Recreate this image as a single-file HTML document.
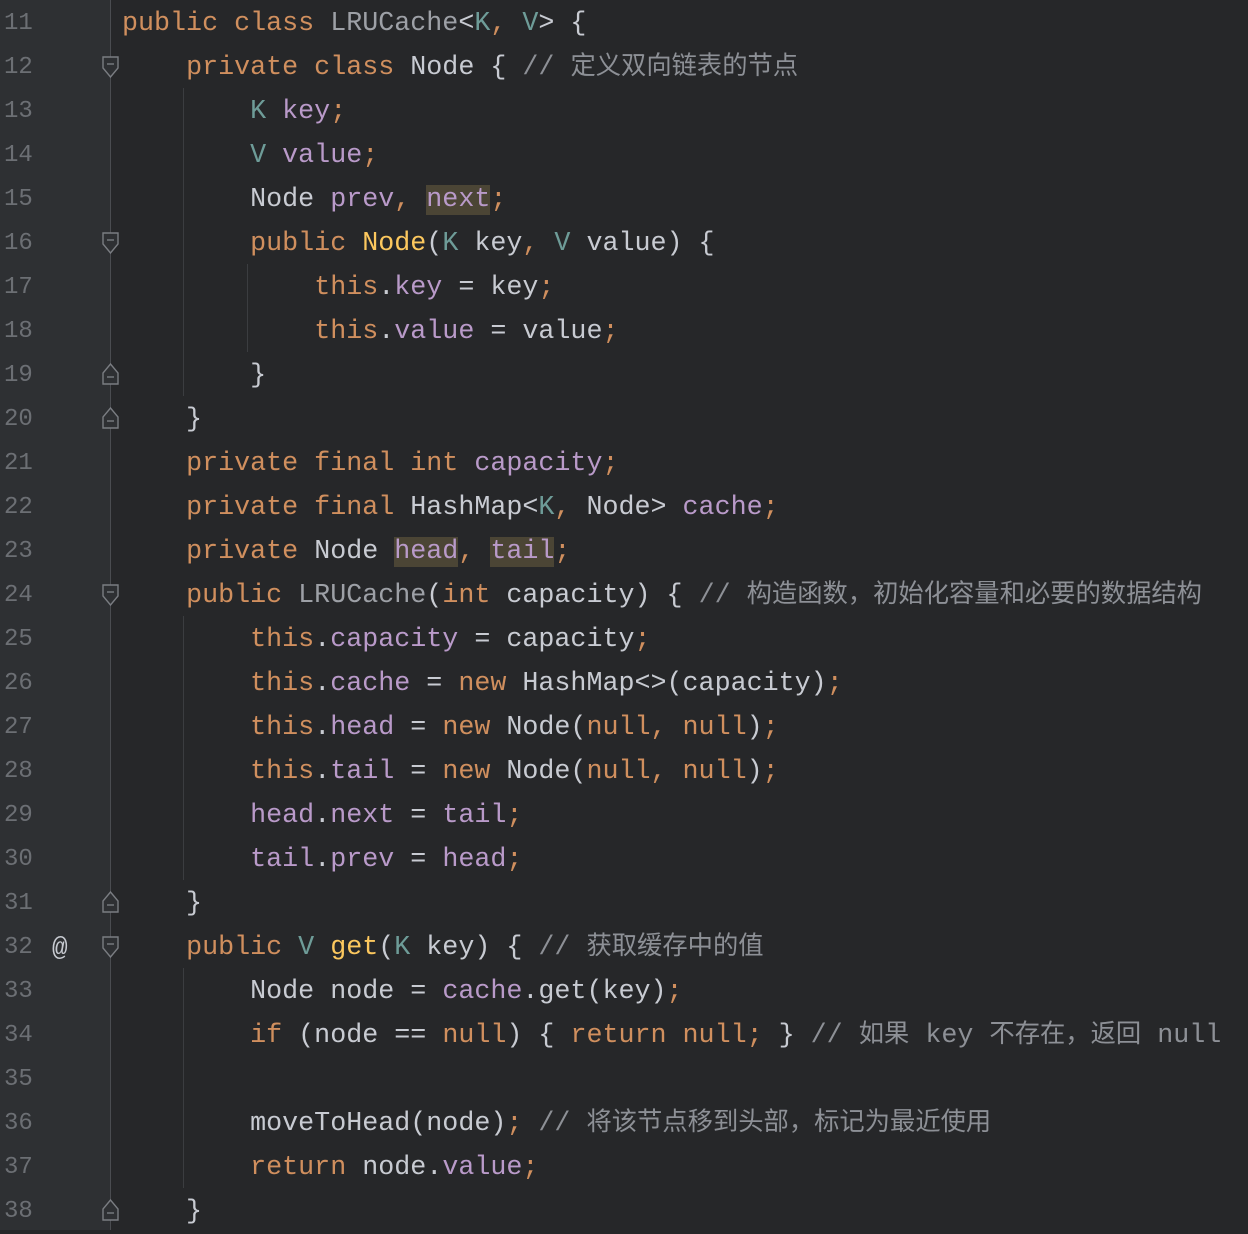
<!DOCTYPE html>
<html><head><meta charset="utf-8"><style>
html,body{margin:0;padding:0}
body{width:1248px;height:1230px;background:#262729;position:relative;overflow:hidden;font-family:"Liberation Mono","Noto Sans CJK SC",monospace;font-size:26.7px}
#gut{position:absolute;left:0;top:0;width:110px;height:1230px;background:#2e3033}
.fl{position:absolute;left:110px;top:0;width:1px;height:1230px;background:#4a4c50}
.ln{position:absolute;left:4px;width:40px;color:#6c6f74;font-size:24px;line-height:44px;font-family:"Liberation Mono",monospace;margin-top:2px}
.l{position:absolute;left:122px;white-space:pre;line-height:44px;color:#c8cbd2;margin-top:2px}
.k{color:#d08f5e}.f{color:#b99ac9}.t{color:#6e9c98}.m{color:#fcc85e}.c{color:#8d9096}
.z{font-size:25.3px}
.g{color:#9da0a6}.h{background:#4b4535}
.ig{position:absolute;width:1px;background:#3b3d40}
.fold{position:absolute;left:101px;width:19px;height:22px}
</style></head><body>
<div id="gut"></div><div class="fl"></div>
<div class="ig" style="left:183px;top:88px;height:308px"></div>
<div class="ig" style="left:247px;top:264px;height:88px"></div>
<div class="ig" style="left:183px;top:616px;height:264px"></div>
<div class="ig" style="left:183px;top:968px;height:220px"></div>
<svg class="fold" style="top:56px" viewBox="0 0 19 22"><path d="M2 1H17V12L9.5 21L2 12Z" fill="#2e3033" stroke="#7a7d82" stroke-width="1.4"/><path d="M6 8H13" stroke="#7a7d82" stroke-width="1.4"/></svg>
<svg class="fold" style="top:232px" viewBox="0 0 19 22"><path d="M2 1H17V12L9.5 21L2 12Z" fill="#2e3033" stroke="#7a7d82" stroke-width="1.4"/><path d="M6 8H13" stroke="#7a7d82" stroke-width="1.4"/></svg>
<svg class="fold" style="top:584px" viewBox="0 0 19 22"><path d="M2 1H17V12L9.5 21L2 12Z" fill="#2e3033" stroke="#7a7d82" stroke-width="1.4"/><path d="M6 8H13" stroke="#7a7d82" stroke-width="1.4"/></svg>
<svg class="fold" style="top:936px" viewBox="0 0 19 22"><path d="M2 1H17V12L9.5 21L2 12Z" fill="#2e3033" stroke="#7a7d82" stroke-width="1.4"/><path d="M6 8H13" stroke="#7a7d82" stroke-width="1.4"/></svg>
<svg class="fold" style="top:363px" viewBox="0 0 19 22"><path d="M2 21H17V10L9.5 1L2 10Z" fill="#2e3033" stroke="#7a7d82" stroke-width="1.4"/><path d="M6 14H13" stroke="#7a7d82" stroke-width="1.4"/></svg>
<svg class="fold" style="top:407px" viewBox="0 0 19 22"><path d="M2 21H17V10L9.5 1L2 10Z" fill="#2e3033" stroke="#7a7d82" stroke-width="1.4"/><path d="M6 14H13" stroke="#7a7d82" stroke-width="1.4"/></svg>
<svg class="fold" style="top:891px" viewBox="0 0 19 22"><path d="M2 21H17V10L9.5 1L2 10Z" fill="#2e3033" stroke="#7a7d82" stroke-width="1.4"/><path d="M6 14H13" stroke="#7a7d82" stroke-width="1.4"/></svg>
<svg class="fold" style="top:1199px" viewBox="0 0 19 22"><path d="M2 21H17V10L9.5 1L2 10Z" fill="#2e3033" stroke="#7a7d82" stroke-width="1.4"/><path d="M6 14H13" stroke="#7a7d82" stroke-width="1.4"/></svg>
<div class="ln" style="top:0">11</div><div class="ln" style="top:44px">12</div><div class="ln" style="top:88px">13</div><div class="ln" style="top:132px">14</div><div class="ln" style="top:176px">15</div><div class="ln" style="top:220px">16</div><div class="ln" style="top:264px">17</div><div class="ln" style="top:308px">18</div><div class="ln" style="top:352px">19</div><div class="ln" style="top:396px">20</div><div class="ln" style="top:440px">21</div><div class="ln" style="top:484px">22</div><div class="ln" style="top:528px">23</div><div class="ln" style="top:572px">24</div><div class="ln" style="top:616px">25</div><div class="ln" style="top:660px">26</div><div class="ln" style="top:704px">27</div><div class="ln" style="top:748px">28</div><div class="ln" style="top:792px">29</div><div class="ln" style="top:836px">30</div><div class="ln" style="top:880px">31</div><div class="ln" style="top:924px">32</div><div class="ln" style="top:968px">33</div><div class="ln" style="top:1012px">34</div><div class="ln" style="top:1056px">35</div><div class="ln" style="top:1100px">36</div><div class="ln" style="top:1144px">37</div><div class="ln" style="top:1188px">38</div>
<div style="position:absolute;left:52px;top:926px;line-height:44px;color:#c8cbd2;font-size:26px">@</div>
<div class="l" style="top:0"><span class="k">public class </span><span class="g">LRUCache</span>&lt;<span class="t">K</span><span class="k">, </span><span class="t">V</span>&gt; {</div>
<div class="l" style="top:44px">    <span class="k">private class </span>Node { <span class="c">// <span class="z">定义双向链表的节点</span></span></div>
<div class="l" style="top:88px">        <span class="t">K</span> <span class="f">key</span><span class="k">;</span></div>
<div class="l" style="top:132px">        <span class="t">V</span> <span class="f">value</span><span class="k">;</span></div>
<div class="l" style="top:176px">        Node <span class="f">prev</span><span class="k">, </span><span class="f h">next</span><span class="k">;</span></div>
<div class="l" style="top:220px">        <span class="k">public </span><span class="m">Node</span>(<span class="t">K</span> key<span class="k">, </span><span class="t">V</span> value) {</div>
<div class="l" style="top:264px">            <span class="k">this</span>.<span class="f">key</span> = key<span class="k">;</span></div>
<div class="l" style="top:308px">            <span class="k">this</span>.<span class="f">value</span> = value<span class="k">;</span></div>
<div class="l" style="top:352px">        }</div>
<div class="l" style="top:396px">    }</div>
<div class="l" style="top:440px">    <span class="k">private final int </span><span class="f">capacity</span><span class="k">;</span></div>
<div class="l" style="top:484px">    <span class="k">private final </span>HashMap&lt;<span class="t">K</span><span class="k">, </span>Node&gt; <span class="f">cache</span><span class="k">;</span></div>
<div class="l" style="top:528px">    <span class="k">private </span>Node <span class="f h">head</span><span class="k">, </span><span class="f h">tail</span><span class="k">;</span></div>
<div class="l" style="top:572px">    <span class="k">public </span><span class="g">LRUCache</span>(<span class="k">int </span>capacity) { <span class="c">// <span class="z">构造函数，初始化容量和必要的数据结构</span></span></div>
<div class="l" style="top:616px">        <span class="k">this</span>.<span class="f">capacity</span> = capacity<span class="k">;</span></div>
<div class="l" style="top:660px">        <span class="k">this</span>.<span class="f">cache</span> = <span class="k">new </span>HashMap&lt;&gt;(capacity)<span class="k">;</span></div>
<div class="l" style="top:704px">        <span class="k">this</span>.<span class="f">head</span> = <span class="k">new </span>Node(<span class="k">null, null</span>)<span class="k">;</span></div>
<div class="l" style="top:748px">        <span class="k">this</span>.<span class="f">tail</span> = <span class="k">new </span>Node(<span class="k">null, null</span>)<span class="k">;</span></div>
<div class="l" style="top:792px">        <span class="f">head</span>.<span class="f">next</span> = <span class="f">tail</span><span class="k">;</span></div>
<div class="l" style="top:836px">        <span class="f">tail</span>.<span class="f">prev</span> = <span class="f">head</span><span class="k">;</span></div>
<div class="l" style="top:880px">    }</div>
<div class="l" style="top:924px">    <span class="k">public </span><span class="t">V</span> <span class="m">get</span>(<span class="t">K</span> key) { <span class="c">// <span class="z">获取缓存中的值</span></span></div>
<div class="l" style="top:968px">        Node node = <span class="f">cache</span>.get(key)<span class="k">;</span></div>
<div class="l" style="top:1012px">        <span class="k">if </span>(node == <span class="k">null</span>) { <span class="k">return null; </span>} <span class="c">// <span class="z">如果</span> key <span class="z">不存在，返回</span> null</span></div>
<div class="l" style="top:1100px">        moveToHead(node)<span class="k">; </span><span class="c">// <span class="z">将该节点移到头部，标记为最近使用</span></span></div>
<div class="l" style="top:1144px">        <span class="k">return </span>node.<span class="f">value</span><span class="k">;</span></div>
<div class="l" style="top:1188px">    }</div>
</body></html>
